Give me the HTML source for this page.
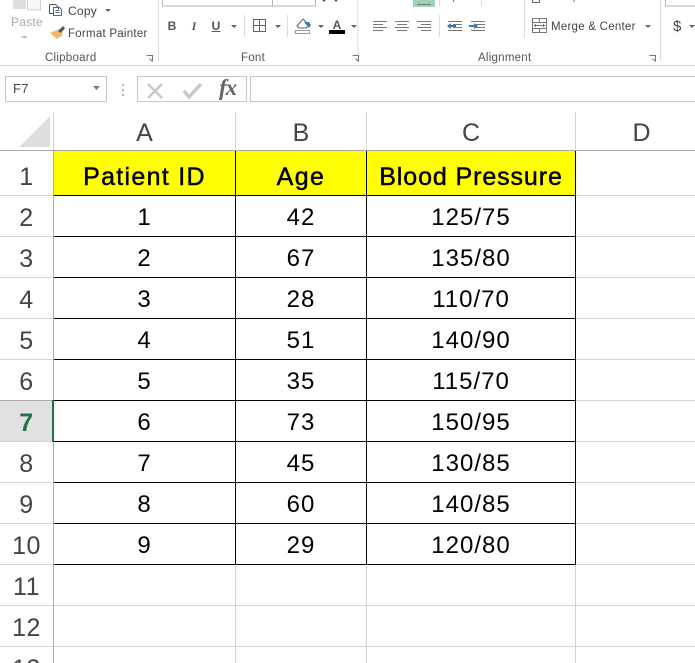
<!DOCTYPE html>
<html>
<head>
<meta charset="utf-8">
<style>
html,body{margin:0;padding:0;background:#fff;}
#p{position:relative;width:695px;height:663px;overflow:hidden;background:#fff;font-family:"Liberation Sans",sans-serif;}
#p div{position:absolute;}
.t{white-space:nowrap;color:#444;font-size:12px;line-height:14px;letter-spacing:.25px;}
.g{text-align:center;color:#555;font-size:12px;line-height:14px;}
.l{background:#d4d4d4;}
.gh{height:1px;background:#d4d4d4;}
.gv{width:1px;background:#d4d4d4;}
.k{background:#000;}
.c{color:#000;font-size:24px;line-height:30px;text-align:center;letter-spacing:1px;white-space:nowrap;}
.h{color:#000;font-size:25px;line-height:30px;text-align:center;white-space:nowrap;-webkit-text-stroke:.45px #000;}
.r{left:0;width:53px;text-align:center;color:#444;font-size:25px;line-height:30px;letter-spacing:.5px;}
.ch{top:119px;color:#444;font-size:25px;line-height:28px;text-align:center;}
svg{position:absolute;overflow:visible;}
</style>
</head>
<body>
<div id="p">

<!-- Ribbon -->
<svg style="left:0;top:0" width="695" height="66">
 <rect x="13" y="0" width="13" height="9" fill="#dedede"/>
 <rect x="27.5" y="-1" width="13" height="11" fill="#f6f6f6" stroke="#cfcfcf"/>
 <path d="M21 36h7l-3.500 3z" fill="#bdbdbd"/>
 <g fill="none" stroke="#555" stroke-width="1">
  <path d="M49.500 4.500h6l3 3v2M49.500 4.500v9h4"/>
  <path d="M53.500 7.500h6l2 2v6h-8z" stroke="#4a6a90"/>
  <path d="M55.500 10.500h4M55.500 12.500h4" stroke="#4a6a90"/>
 </g>
 <path d="M105 9h6l-3 3z" fill="#666"/>
 <path d="M50 33l9-4 4 6-6 4z" fill="#eeb868"/>
 <path d="M58 31l5-5 2 2-4 5z" fill="#555"/>
 <rect x="158" y="0" width="1" height="61" fill="#dcdcdc"/>
 <path d="M162.500 -1v7h110v-7M272.500 6h43v-7" fill="none" stroke="#b5b5b5"/>
 <path d="M322 -1l2 2 2-2M334 -1l2 2 2-2" fill="none" stroke="#555" stroke-width="1.200"/>
 <path d="M231 25h6l-3 3zM275 25h6l-3 3zM318 25h6l-3 3zM351 25h6l-3 3z" fill="#666"/>
 <rect x="244" y="15" width="1" height="22" fill="#dcdcdc"/>
 <rect x="287" y="15" width="1" height="22" fill="#dcdcdc"/>
 <path d="M253.500 19.500h12v12h-12zM259.500 19.500v12M253.500 25.500h12" fill="none" stroke="#666"/>
 <path d="M297 26l6-7 6 6-3 3h-7z" fill="none" stroke="#666"/>
 <path d="M304 22h5l2 3-2 3z" fill="#3f7cba"/>
 <rect x="295.500" y="30.500" width="14" height="3" fill="#fff" stroke="#999"/>
 <rect x="329" y="30" width="16" height="4" fill="#000"/>
 <path d="M357.500 0h1v61h-1z" fill="#dcdcdc"/>
 <rect x="413" y="0" width="22" height="7" fill="#9fd5b7"/>
 <rect x="417" y="4" width="14" height="1" fill="#777"/>
 <rect x="439" y="0" width="1" height="6" fill="#dcdcdc"/>
 <rect x="481" y="0" width="1" height="6" fill="#dcdcdc"/>
 <rect x="524" y="0" width="1" height="38" fill="#dcdcdc"/>
 <path d="M454 0l-1 2" stroke="#666" fill="none"/>
 <g stroke="#777" fill="none">
  <path d="M373 21.500h14M373 24.500h10M373 27.500h14M373 30.500h10"/>
  <path d="M395 21.500h14M397 24.500h10M395 27.500h14M397 30.500h10"/>
  <path d="M417 21.500h14M421 24.500h10M417 27.500h14M421 30.500h10"/>
  <path d="M448 21.500h14M453 24.500h9M453 27.500h9M448 30.500h14"/>
  <path d="M471 21.500h14M476 24.500h9M476 27.500h9M471 30.500h14"/>
  <path d="M532.500 18.500h14v14h-14zM532.500 22.500h14M532.500 28.500h14M539.500 18.500v4M539.500 28.500v4"/>
 </g>
 <rect x="439" y="15" width="1" height="22" fill="#dcdcdc"/>
 <path d="M447 26l4-3v2h5v2h-5v2z" fill="#3f75aa"/>
 <path d="M478 26l-4-3v2h-5v2h5v2z" fill="#3f75aa"/>
 <path d="M534 25.500h11" stroke="#3f7cba"/>
 <path d="M534 25.500l2-2v4zM545 25.500l-2-2v4z" fill="#3f7cba"/>
 <path d="M532.500 -1v3.500h7v-3.500" fill="none" stroke="#666"/>
 <path d="M574 0v2" stroke="#666"/>
 <path d="M645 25h6l-3 3zM689 25h6l-3 3z" fill="#666"/>
 <rect x="660" y="0" width="1" height="61" fill="#dcdcdc"/>
 <path d="M665.500 -1v7h30" fill="none" stroke="#b5b5b5"/>
 <g fill="none" stroke="#777">
  <path d="M146.500 55.500h6v6M149.500 58.500l3 3" />
  <path d="M352.500 55.500h6v6M355.500 58.500l3 3"/>
  <path d="M649.500 55.500h6v6M652.500 58.500l3 3"/>
 </g>
</svg>

<div class="t" style="left:11px;top:15px;color:#aaa;">Paste</div>
<div class="t" style="left:68px;top:4px;">Copy</div>
<div class="t" style="left:68px;top:27px;font-size:11.500px;">Format Painter</div>
<div class="t" style="left:45px;top:51px;font-size:11.500px;color:#555;">Clipboard</div>
<div class="t" style="left:241px;top:51px;font-size:11.500px;color:#555;">Font</div>
<div class="t" style="left:478px;top:51px;font-size:11.500px;color:#555;">Alignment</div>
<div class="t" style="left:551px;top:20px;font-size:11.500px;">Merge &amp; Center</div>
<div class="t" style="left:673px;top:19px;font-size:15px;line-height:16px;">$</div>
<div class="g" style="left:166px;top:19px;width:12px;font-weight:bold;">B</div>
<div class="g" style="left:188px;top:19px;width:12px;font-style:italic;font-family:'Liberation Serif',serif;font-weight:bold;">I</div>
<div class="g" style="left:210px;top:19px;width:12px;font-weight:bold;text-decoration:underline;">U</div>
<div class="g" style="left:331px;top:18px;width:12px;font-weight:bold;">A</div>

<div class="l" style="left:0;top:65px;width:695px;height:1px;"></div>

<!-- Formula bar -->
<div style="left:5px;top:76px;width:100px;height:24px;border:1px solid #c6c6c6;"></div>
<div class="t" style="left:13px;top:82px;font-size:13px;">F7</div>
<svg style="left:0;top:70px" width="695" height="40">
 <path d="M93 16h7l-3.500 4z" fill="#777"/>
 <path d="M122 14h2v2h-2zM122 19h2v2h-2zM122 24h2v2h-2z" fill="#b5b5b5"/>
 <path d="M148 14l14 14M162 14l-14 14" stroke="#c8c8c8" stroke-width="2.500" fill="none"/>
 <path d="M184 21l5 6 12-13" stroke="#c8c8c8" stroke-width="3.500" fill="none"/>
</svg>
<div style="left:137px;top:76px;width:108px;height:24px;border:1px solid #c6c6c6;"></div>
<div style="left:219px;top:76px;font:italic bold 23px/24px 'Liberation Serif',serif;color:#666;letter-spacing:-1px;">fx</div>
<div style="left:250px;top:76px;width:450px;height:24px;border:1px solid #c6c6c6;"></div>

<!-- Corner and header lines -->
<svg style="left:0;top:105px" width="60" height="50">
 <path d="M50 11v31H19z" fill="#dedede"/>
</svg>
<div class="gv" style="left:53px;top:112px;height:38px;"></div>
<div class="gv" style="left:235px;top:112px;height:38px;"></div>
<div class="gv" style="left:366px;top:112px;height:38px;"></div>
<div class="gv" style="left:575px;top:112px;height:38px;"></div>

<div class="ch" style="left:54px;width:181px;">A</div>
<div class="ch" style="left:236px;width:130px;">B</div>
<div class="ch" style="left:367px;width:208px;">C</div>
<div class="ch" style="left:576px;width:131px;">D</div>

<div style="left:0;top:150px;width:695px;height:1px;background:#ababab;"></div>

<!-- Yellow header -->
<div style="left:54px;top:151px;width:522px;height:44px;background:#ffff00;"></div>

<!-- Row header lines + gridlines -->
<div class="gh" style="left:0;top:195px;width:53px;"></div>
<div class="gh" style="left:0;top:236px;width:53px;"></div>
<div class="gh" style="left:0;top:277px;width:53px;"></div>
<div class="gh" style="left:0;top:318px;width:53px;"></div>
<div class="gh" style="left:0;top:359px;width:53px;"></div>
<div class="gh" style="left:0;top:441px;width:53px;"></div>
<div class="gh" style="left:0;top:482px;width:53px;"></div>
<div class="gh" style="left:0;top:523px;width:53px;"></div>
<div class="gh" style="left:0;top:564px;width:695px;"></div>
<div class="gh" style="left:0;top:605px;width:695px;"></div>
<div class="gh" style="left:0;top:646px;width:695px;"></div>
<div class="gh" style="left:576px;top:195px;width:119px;"></div>
<div class="gh" style="left:576px;top:236px;width:119px;"></div>
<div class="gh" style="left:576px;top:277px;width:119px;"></div>
<div class="gh" style="left:576px;top:318px;width:119px;"></div>
<div class="gh" style="left:576px;top:359px;width:119px;"></div>
<div class="gh" style="left:576px;top:400px;width:119px;"></div>
<div class="gh" style="left:576px;top:441px;width:119px;"></div>
<div class="gh" style="left:576px;top:482px;width:119px;"></div>
<div class="gh" style="left:576px;top:523px;width:119px;"></div>
<div class="gv" style="left:235px;top:565px;height:98px;"></div>
<div class="gv" style="left:366px;top:565px;height:98px;"></div>
<div class="gv" style="left:575px;top:565px;height:98px;"></div>

<!-- Selected row header -->
<div style="left:0;top:400px;width:53px;height:41px;background:#e1e1e1;"></div>
<div style="left:0;top:400px;width:53px;height:1px;background:#ababab;"></div>

<!-- Row header right edge -->
<div style="left:53px;top:150px;width:1px;height:513px;background:#ababab;"></div>
<div style="left:52px;top:400px;width:2px;height:42px;background:#217346;"></div>

<!-- Table borders -->
<div class="k" style="left:54px;top:195px;width:522px;height:1px;"></div>
<div class="k" style="left:54px;top:236px;width:522px;height:1px;"></div>
<div class="k" style="left:54px;top:277px;width:522px;height:1px;"></div>
<div class="k" style="left:54px;top:318px;width:522px;height:1px;"></div>
<div class="k" style="left:54px;top:359px;width:522px;height:1px;"></div>
<div class="k" style="left:54px;top:400px;width:522px;height:1px;"></div>
<div class="k" style="left:54px;top:441px;width:522px;height:1px;"></div>
<div class="k" style="left:54px;top:482px;width:522px;height:1px;"></div>
<div class="k" style="left:54px;top:523px;width:522px;height:1px;"></div>
<div class="k" style="left:54px;top:564px;width:522px;height:1px;"></div>
<div class="k" style="left:235px;top:151px;width:1px;height:414px;"></div>
<div class="k" style="left:366px;top:151px;width:1px;height:414px;"></div>
<div class="k" style="left:575px;top:151px;width:1px;height:414px;"></div>

<!-- Row numbers -->
<div class="r" style="top:162px;">1</div>
<div class="r" style="top:203px;">2</div>
<div class="r" style="top:244px;">3</div>
<div class="r" style="top:285px;">4</div>
<div class="r" style="top:326px;">5</div>
<div class="r" style="top:367px;">6</div>
<div class="r" style="top:408px;color:#217346;font-weight:bold;">7</div>
<div class="r" style="top:449px;">8</div>
<div class="r" style="top:490px;">9</div>
<div class="r" style="top:531px;">10</div>
<div class="r" style="top:572px;">11</div>
<div class="r" style="top:613px;">12</div>
<div class="r" style="top:654px;">13</div>

<!-- Headers -->
<div class="h" style="left:54px;top:162px;width:181px;letter-spacing:1.3px;">Patient ID</div>
<div class="h" style="left:236px;top:162px;width:130px;letter-spacing:1.4px;">Age</div>
<div class="h" style="left:367px;top:162px;width:208px;letter-spacing:.9px;">Blood Pressure</div>

<!-- Data -->
<div class="c" style="left:54px;top:203px;width:181px;">1</div><div class="c" style="left:236px;top:203px;width:130px;">42</div><div class="c" style="left:367px;top:203px;width:208px;">125/75</div>
<div class="c" style="left:54px;top:244px;width:181px;">2</div><div class="c" style="left:236px;top:244px;width:130px;">67</div><div class="c" style="left:367px;top:244px;width:208px;">135/80</div>
<div class="c" style="left:54px;top:285px;width:181px;">3</div><div class="c" style="left:236px;top:285px;width:130px;">28</div><div class="c" style="left:367px;top:285px;width:208px;">110/70</div>
<div class="c" style="left:54px;top:326px;width:181px;">4</div><div class="c" style="left:236px;top:326px;width:130px;">51</div><div class="c" style="left:367px;top:326px;width:208px;">140/90</div>
<div class="c" style="left:54px;top:367px;width:181px;">5</div><div class="c" style="left:236px;top:367px;width:130px;">35</div><div class="c" style="left:367px;top:367px;width:208px;">115/70</div>
<div class="c" style="left:54px;top:408px;width:181px;">6</div><div class="c" style="left:236px;top:408px;width:130px;">73</div><div class="c" style="left:367px;top:408px;width:208px;">150/95</div>
<div class="c" style="left:54px;top:449px;width:181px;">7</div><div class="c" style="left:236px;top:449px;width:130px;">45</div><div class="c" style="left:367px;top:449px;width:208px;">130/85</div>
<div class="c" style="left:54px;top:490px;width:181px;">8</div><div class="c" style="left:236px;top:490px;width:130px;">60</div><div class="c" style="left:367px;top:490px;width:208px;">140/85</div>
<div class="c" style="left:54px;top:531px;width:181px;">9</div><div class="c" style="left:236px;top:531px;width:130px;">29</div><div class="c" style="left:367px;top:531px;width:208px;">120/80</div>

</div>
</body>
</html>
